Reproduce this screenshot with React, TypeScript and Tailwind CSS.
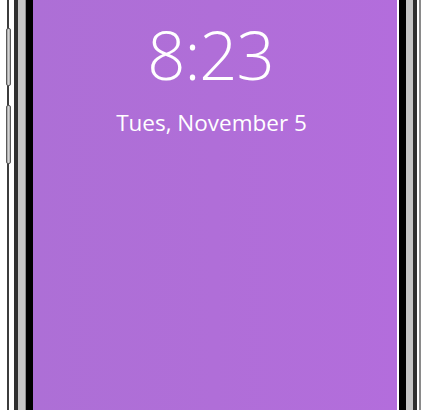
export default function App() {
  return (
    <div className="relative flex h-[410px] w-[422px] overflow-hidden bg-white">
      {/* side buttons */}
      <div className="absolute left-[6px] top-[28px] z-10 h-[58px] w-[5px] rounded-[2px] border border-[#5a5a5a] bg-gradient-to-r from-[#9a9a9a] via-[#d4d4d4] to-[#a8a8a8]" />
      <div className="absolute left-[6px] top-[105px] z-10 h-[59px] w-[5px] rounded-[2px] border border-[#5a5a5a] bg-gradient-to-r from-[#9a9a9a] via-[#d4d4d4] to-[#a8a8a8]" />

      {/* phone frame */}
      <div className="ml-[7px] flex h-full w-[414px] border-l-2 border-r-2 border-l-[#3c3c3c] border-r-[#8a8a8a] bg-white pl-[5px] pr-[2px]">
        <div className="flex h-full flex-1 border-x-4 border-[#2f2f2f]">
          <div className="flex h-full flex-1 border-x-[7px] border-[#c5c5c5]">
            <div className="flex h-full flex-1 border-l border-r-0 border-[#8c8c8c] bg-black pl-[7px] pr-[7px]">
              <div className="flex h-full flex-1 border-r-2 border-r-white">
                <div
                  className="flex h-full w-[364px] flex-col items-center bg-gradient-to-r from-[#ad6fd6] via-[#b06ed8] to-[#b36ddc] pr-[7px] text-white"
                  style={{ fontFamily: '"Open Sans", "Noto Sans", sans-serif' }}
                >
                  <div className="mt-[21px] pr-[2px] text-[67px] font-light leading-none tracking-[-1px]">8:23</div>
                  <div className="mt-[24px] text-[22.5px] font-normal leading-none">Tues, November 5</div>
                </div>
              </div>
            </div>
          </div>
        </div>
      </div>
    </div>
  );
}
